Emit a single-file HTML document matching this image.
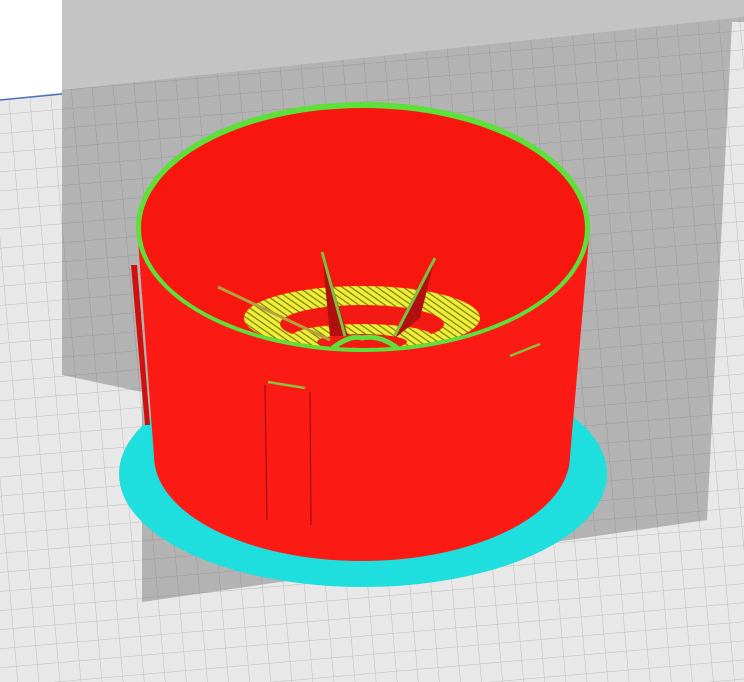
<!DOCTYPE html>
<html><head><style>html,body{margin:0;padding:0;width:744px;height:682px;overflow:hidden;background:#e9e9e9}</style></head>
<body>
<svg width="744" height="682" viewBox="0 0 744 682" xmlns="http://www.w3.org/2000/svg">
<defs>
<pattern id="g" width="21" height="19" patternUnits="userSpaceOnUse" patternTransform="rotate(-5)">
<rect width="21" height="19" fill="#e8e8e8"/>
<path d="M0 0H21M0 0V19" stroke="#bdbdbd" stroke-width="1"/>
</pattern>
<pattern id="yl" width="5" height="5" patternUnits="userSpaceOnUse" patternTransform="rotate(35)">
<rect width="5" height="5" fill="#efef38"/><path d="M0 4H5" stroke="#7a7a10" stroke-width="1.2"/>
</pattern>
<clipPath id="inner"><ellipse cx="363" cy="228" rx="222" ry="120"/></clipPath>
</defs>
<rect width="744" height="682" fill="url(#g)"/>
<polygon points="0,0 62,0 62,92 0,100" fill="#ffffff"/>
<line x1="0" y1="100" x2="62" y2="94" stroke="#4a6fc0" stroke-width="1.5"/>
<polygon points="62,0 744,0 744,17 62,90" fill="#c4c4c4"/>
<polygon points="62,90 744,17 744,22 732,22 707,520 142,602 142,392 62,375" fill="#6a6a6a" opacity="0.42"/>
<ellipse cx="363" cy="474" rx="244" ry="113" fill="#1fdede"/>
<path d="M137 227 L154 456 A208 105 0 0 0 570 456 L590 227 Z" fill="#fb1a14"/>
<path d="M131 265 L137 265 L150 425 L145 425 Z" fill="#d0100c"/>
<ellipse cx="363" cy="227" rx="227" ry="125" fill="#5de03a"/>
<ellipse cx="363" cy="228" rx="222" ry="120" fill="#f8170f"/>
<g clip-path="url(#inner)">
<ellipse cx="362" cy="318" rx="118" ry="32" fill="url(#yl)"/>
<ellipse cx="362" cy="324" rx="82" ry="19" fill="#f21a12"/>
<ellipse cx="362" cy="336" rx="70" ry="12" fill="url(#yl)"/>
<ellipse cx="362" cy="342" rx="45" ry="8" fill="#f21a12"/>
<path d="M218 287 L330 340" stroke="#b5a040" stroke-width="3"/>
<path d="M322 252 L348 336 L330 336 Z" fill="#b01010"/>
<path d="M322 252 L345 336" stroke="#7dbf40" stroke-width="3"/>
<path d="M435 258 L395 338 L420 318 Z" fill="#b01010"/>
<path d="M435 258 L395 335" stroke="#7dbf40" stroke-width="3"/>
<path d="M330 350 Q350 334 362 338 Q380 334 400 350" fill="none" stroke="#5de03a" stroke-width="5"/>
</g>
<path d="M510 356 L540 344" stroke="#8fbf40" stroke-width="2.5"/>
<path d="M268 382 L305 388" stroke="#8fbf40" stroke-width="2.5"/>
<path d="M265 385 L267 520 M310 392 L311 525" stroke="#8a0c08" stroke-width="1"/>
</svg>
</body></html>
